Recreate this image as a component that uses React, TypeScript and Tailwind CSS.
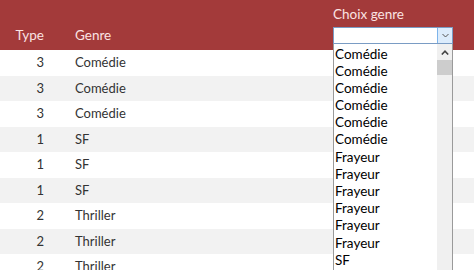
const rows: [number, string][] = [
  [3, "Comédie"],
  [3, "Comédie"],
  [3, "Comédie"],
  [1, "SF"],
  [1, "SF"],
  [1, "SF"],
  [2, "Thriller"],
  [2, "Thriller"],
  [2, "Thriller"],
];

const options = [
  "Comédie",
  "Comédie",
  "Comédie",
  "Comédie",
  "Comédie",
  "Comédie",
  "Frayeur",
  "Frayeur",
  "Frayeur",
  "Frayeur",
  "Frayeur",
  "Frayeur",
  "SF",
  "SF",
];

export default function App() {
  return (
    <div
      className="relative h-[270px] w-[474px] overflow-hidden bg-white text-[13px] text-[#333]"
      style={{ fontFamily: "Lato, 'Open Sans', sans-serif" }}
    >
      {/* Header */}
      <div className="flex h-[50px] items-end bg-[#a33a3a] pb-[5px] text-[#fbe3e3] text-[13.5px]">
        <div className="w-[45px] pr-[1px] text-right">Type</div>
        <div className="ml-[30px]">Genre</div>
      </div>

      {/* Rows */}
      <div>
        {rows.map(([t, g], i) => (
          <div
            key={i}
            className={`flex h-[25.5px] items-center ${i % 2 === 1 ? "bg-[#f2f2f2]" : "bg-white"}`}
          >
            <div className="w-[45px] pr-[1px] text-right">{t}</div>
            <div className="ml-[30px]">{g}</div>
          </div>
        ))}
      </div>

      {/* Combo box overlay */}
      <div className="absolute left-[333px] top-[5px] w-[120px]">
        <div className="text-[13.5px] text-[#fbe3e3] leading-[18px]">Choix genre</div>
        <div className="mt-[4px] flex h-[17px] border border-[#7a9cc4] bg-white">
          <div className="flex-1" />
          <div className="flex w-[15px] items-center justify-center border-l border-[#7eb4ea] bg-[#dcecfc]">
            <svg width="7" height="5" viewBox="0 0 7 5">
              <path d="M0.5 1 L3.5 4 L6.5 1" fill="none" stroke="#555" strokeWidth="1" />
            </svg>
          </div>
        </div>
        <div className="flex h-[240px] border-x border-[#9a9a9a] bg-white">
          <div className="flex-1 pl-[1px] pt-[1.5px] text-[13.5px] text-black">
            {options.map((o, i) => (
              <div key={i} className="h-[17.2px] leading-[17px]">
                {o}
              </div>
            ))}
          </div>
          <div className="flex w-[15px] flex-col bg-[#f0f0f0]">
            <div className="flex h-[16px] items-center justify-center">
              <svg width="8" height="5" viewBox="0 0 8 5">
                <path d="M0.8 4.5 L4 1.2 L7.2 4.5" fill="none" stroke="#444" strokeWidth="1.6" />
              </svg>
            </div>
            <div className="h-[15px] bg-[#cdcdcd]" />
          </div>
        </div>
      </div>
    </div>
  );
}
